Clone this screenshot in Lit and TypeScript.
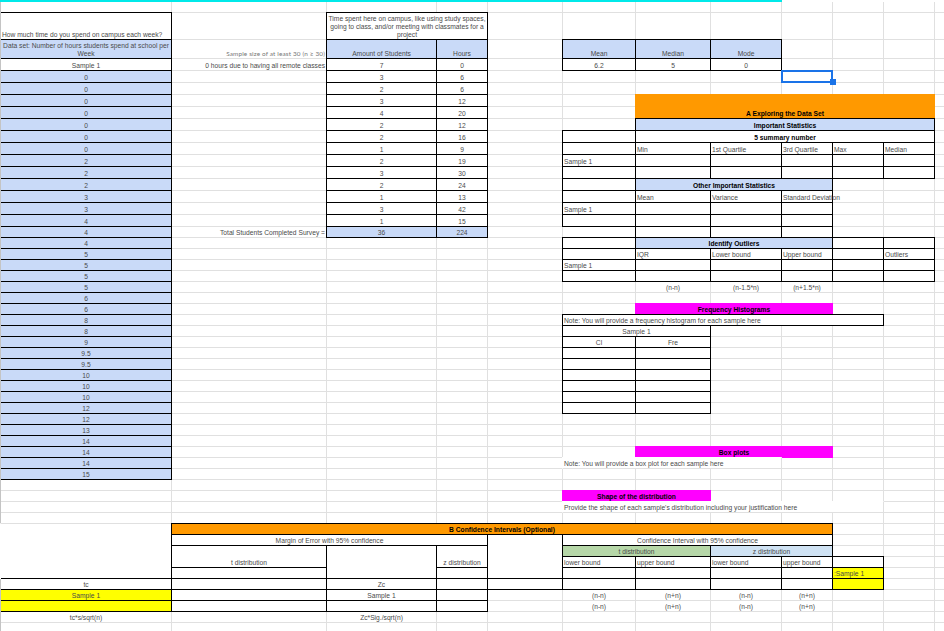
import { LitElement, html, css } from 'lit';
import { customElement } from 'lit/decorators.js';

// column and row sizes of the sheet, the last pixel of each is its grid line
const COLS = [171, 155, 110, 51, 75, 73, 75, 71, 51, 51, 51, 10];
const ROWS = [11, 27, 19, ...Array(14).fill(12), ...Array(37).fill(11)];

type Cell = { c: number; r: number; cs: number; rs: number; text: string; cls: string };

const cell = (c: number, r: number, text = '', cls = 'box', cs = 1, rs = 1): Cell => ({ c, r, cs, rs, text, cls });

const colA = [0, 0, 0, 0, 0, 0, 0, 2, 2, 2, 3, 3, 4, 4, 4, 5, 5, 5, 5, 6, 6, 8, 8, 9, 9.5, 9.5, 10, 10, 10, 12, 12, 13, 14, 14, 14, 15];
const survey = [[7, 0], [3, 6], [2, 6], [3, 12], [4, 20], [2, 12], [2, 16], [1, 9], [2, 19], [3, 30], [2, 24], [1, 13], [3, 42], [1, 15]];

function buildCells(): Cell[] {
  const out: Cell[] = [];
  const emptyRow = (r: number, from: number, to: number) => {
    for (let c = from; c <= to; c++) out.push(cell(c, r));
  };

  // left data column
  out.push(cell(1, 2, 'How much time do you spend on campus each week?', 'box first white'));
  out.push(cell(1, 3, 'Data set: Number of hours students spend at school per Week', 'box first blue center wrap'));
  out.push(cell(1, 4, 'Sample 1', 'box first white center'));
  colA.forEach((v, i) => out.push(cell(1, 5 + i, String(v), 'box first blue center')));

  // notes beside the survey table
  out.push(cell(2, 3, 'Sample size of at least 30 (n ≥ 30)', 'right lato'));
  out.push(cell(2, 4, '0 hours due to having all remote classes', 'right'));
  out.push(cell(2, 18, 'Total Students Completed Survey =', 'right'));

  // survey table
  out.push(cell(3, 2, 'Time spent here on campus, like using study spaces, going to class, and/or meeting with classmates for a project', 'box white center wrap', 2));
  out.push(cell(3, 3, 'Amount of Students', 'box blue center'));
  out.push(cell(4, 3, 'Hours', 'box blue center'));
  survey.forEach(([n, h], i) => {
    out.push(cell(3, 4 + i, String(n), 'box white center'));
    out.push(cell(4, 4 + i, String(h), 'box white center'));
  });
  out.push(cell(3, 18, '36', 'box blue center'));
  out.push(cell(4, 18, '224', 'box blue center'));

  // mean, median, mode
  ['Mean', 'Median', 'Mode'].forEach((t, i) => out.push(cell(6 + i, 3, t, 'box blue center')));
  ['6.2', '5', '0'].forEach((t, i) => out.push(cell(6 + i, 4, t, 'box white center')));

  // A: exploring the data set
  out.push(cell(7, 7, 'A Exploring the Data Set', 'orange center bold', 5, 2));
  out.push(cell(7, 9, 'Important Statistics', 'box blue center bold', 5));
  out.push(cell(6, 10));
  out.push(cell(7, 10, '5 summary number', 'box white center bold', 5));
  out.push(cell(6, 11));
  ['Min', '1st Quartile', '3rd Quartile', 'Max', 'Median'].forEach((t, i) => out.push(cell(7 + i, 11, t)));
  out.push(cell(6, 12, 'Sample 1'));
  emptyRow(12, 7, 11);
  emptyRow(13, 6, 11);

  out.push(cell(6, 14));
  out.push(cell(7, 14, 'Other Important Statistics', 'box blue center bold', 3));
  out.push(cell(6, 15));
  ['Mean', 'Variance', 'Standard Deviation'].forEach((t, i) => out.push(cell(7 + i, 15, t)));
  out.push(cell(6, 16, 'Sample 1'));
  emptyRow(16, 7, 9);
  emptyRow(17, 6, 9);
  emptyRow(18, 7, 9);

  out.push(cell(6, 19));
  out.push(cell(7, 19, 'Identify Outliers', 'box blue center bold', 3));
  emptyRow(19, 10, 11);
  out.push(cell(6, 20));
  ['IQR', 'Lower bound', 'Upper bound', '', 'Outliers'].forEach((t, i) => out.push(cell(7 + i, 20, t)));
  out.push(cell(6, 21, 'Sample 1'));
  emptyRow(21, 7, 11);
  emptyRow(22, 6, 11);
  ['(n-n)', '(n-1.5*n)', '(n+1.5*n)'].forEach((t, i) => out.push(cell(7 + i, 23, t, 'center')));

  // histograms
  out.push(cell(7, 25, 'Frequency Histograms', 'magenta center bold', 3));
  out.push(cell(6, 26, 'Note: You will provide a frequency histogram for each sample here', 'box white', 5));
  out.push(cell(6, 27, 'Sample 1', 'box white center', 2));
  out.push(cell(6, 28, 'Cl', 'box white center'));
  out.push(cell(7, 28, 'Fre', 'box white center'));
  for (let r = 29; r <= 34; r++) emptyRow(r, 6, 7);

  out.push(cell(7, 38, 'Box plots', 'magenta center bold', 3));
  out.push(cell(6, 39, 'Note: You will provide a box plot for each sample here', 'spill', 3));
  out.push(cell(6, 42, 'Shape of the distribution', 'magenta center bold', 2));
  out.push(cell(6, 43, "Provide the shape of each sample's distribution including your justification here", 'spill', 5));

  // B: confidence intervals
  out.push(cell(1, 45, '', 'blank', 1, 5));
  out.push(cell(2, 45, 'B Confidence Intervals (Optional)', 'box orange center bold', 8));
  out.push(cell(2, 46, 'Margin of Error with 95% confidence', 'box white center', 3));
  out.push(cell(5, 46, '', 'box white', 1, 4));
  out.push(cell(6, 46, 'Confidence Interval with 95% confidence', 'box white center', 4));
  out.push(cell(2, 47, 't distribution', 'box white center', 1, 2));
  out.push(cell(3, 47, '', 'box white', 1, 3));
  out.push(cell(4, 47, 'z distribution', 'box white center', 1, 2));
  out.push(cell(6, 47, 't distribution', 'box green center', 2));
  out.push(cell(8, 47, 'z distribution', 'box pale center', 2));
  ['lower bound', 'upper bound', 'lower bound', 'upper bound'].forEach((t, i) => out.push(cell(6 + i, 48, t)));
  out.push(cell(10, 48));
  out.push(cell(2, 49));
  out.push(cell(4, 49));
  emptyRow(49, 6, 9);
  out.push(cell(10, 49, ':Sample 1', 'box yellow'));
  emptyRow(50, 5, 9);
  out.push(cell(10, 50, '', 'box yellow'));

  out.push(cell(1, 50, 'tc', 'box first white center'));
  out.push(cell(1, 51, 'Sample 1', 'box first yellow center'));
  out.push(cell(1, 52, '', 'box first yellow'));
  out.push(cell(1, 53, 'tc*s/sqrt(n)', 'center'));
  out.push(cell(2, 50));
  out.push(cell(3, 50, 'Zc', 'box white center'));
  out.push(cell(4, 50));
  out.push(cell(2, 51));
  out.push(cell(3, 51, 'Sample 1', 'box white center'));
  out.push(cell(4, 51));
  out.push(cell(2, 52));
  out.push(cell(3, 52));
  out.push(cell(4, 52));
  out.push(cell(3, 53, 'Zc*Sig./sqrt(n)', 'center'));
  for (const r of [51, 52]) {
    ['(n-n)', '(n+n)', '(n-n)', '(n+n)'].forEach((t, i) => out.push(cell(6 + i, r, t, 'center')));
  }
  return out;
}

@customElement('app-root')
export class AppRoot extends LitElement {
  static styles = css`
    :host {
      display: block;
      height: 631px;
      overflow: hidden;
      background: #fff;
      font-family: 'Liberation Sans', Arial, sans-serif;
    }

    .topbar {
      height: 2px;
      width: 782px;
      background: #00e9e9;
    }

    .sheet {
      display: grid;
      border-left: 1px solid #c4c4c4;
      justify-content: start;
    }

    .base {
      border-right: 1px solid #e0e0e0;
      border-bottom: 1px solid #e0e0e0;
    }

    .cell {
      box-sizing: border-box;
      display: flex;
      align-items: flex-end;
      margin: -1px 0 0 -1px;
      padding: 0 1px;
      min-width: 0;
      border: 1px solid transparent;
      font-size: 6.7px;
      line-height: 8px;
      color: #4a4a4a;
      white-space: nowrap;
    }

    .box { border-color: #000; background: #fff; }
    .first { margin-left: 0; border-left: none; }
    .white { background: #fff; }
    .blue { background: #c9daf8; }
    .green { background: #b6d7a8; }
    .pale { background: #cfe2f3; }
    .yellow { background: #ffff00; }
    .orange { background: #ff9900; }
    .magenta { background: #ff00ff; }
    .orange:not(.box) { border-color: #ff9900; }
    .magenta:not(.box) { border-color: #ff00ff; }

    .blank {
      background: #fff;
      border-color: transparent;
      border-top-color: #e0e0e0;
    }

    .spill {
      background: #fff;
      border-bottom-color: #e0e0e0;
      border-right-color: #e0e0e0;
    }

    .center { justify-content: center; text-align: center; }
    .right { justify-content: flex-end; text-align: right; }
    .bold { font-weight: 700; color: #000; }
    .wrap { white-space: normal; }
    .lato { font-family: Lato, sans-serif; font-size: 6.4px; color: #777; letter-spacing: 0.15px; }

    .selection {
      position: relative;
      box-sizing: border-box;
      margin: -1px 0 0 -1px;
      border: 2px solid #1a73e8;
    }

    .handle {
      position: absolute;
      right: -5px;
      bottom: -4px;
      width: 6px;
      height: 6px;
      background: #1a73e8;
    }
  `;

  private cells = buildCells();

  render() {
    const baseCells = [];
    for (let r = 0; r < ROWS.length; r++) {
      for (let c = 0; c < COLS.length; c++) {
        baseCells.push(html`<div class="base" style="grid-column:${c + 1};grid-row:${r + 1}"></div>`);
      }
    }
    const gridStyle = `grid-template-columns:${COLS.map(w => `${w}px`).join(' ')};grid-template-rows:${ROWS.map(h => `${h}px`).join(' ')}`;

    return html`
      <div class="topbar"></div>
      <div class="sheet" style=${gridStyle}>
        ${baseCells}
        ${this.cells.map(k => html`
          <div
            class="cell ${k.cls}"
            style="grid-column:${k.c} / span ${k.cs};grid-row:${k.r} / span ${k.rs}"
          ><span>${k.text}</span></div>
        `)}
        <div class="selection" style="grid-column:9;grid-row:5"><div class="handle"></div></div>
      </div>
    `;
  }
}
